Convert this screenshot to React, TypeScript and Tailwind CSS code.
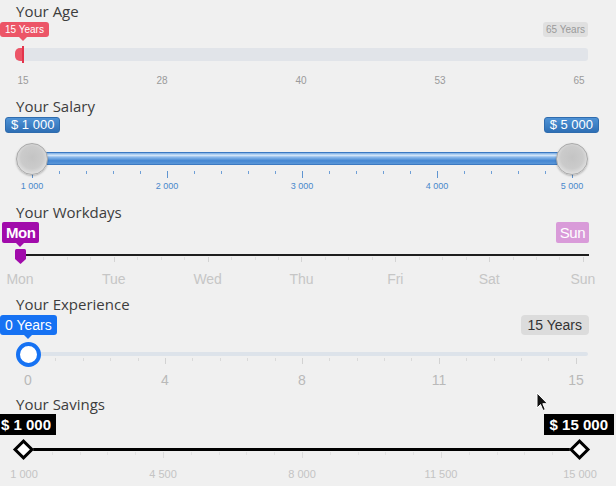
import { clsx } from "clsx";

const sans = "font-['Liberation_Sans',Arial,sans-serif]";

function Title({ children }: { children: string }) {
  return (
    <div className="h-5 pl-4 font-['Open_Sans',sans-serif] text-[15px] leading-5 text-[#3d3d3d]">
      {children}
    </div>
  );
}

interface TicksProps {
  count: number;
  every: number;
  className: string;
  major: string;
  minor: string;
}

function Ticks({ count, every, className, major, minor }: TicksProps) {
  return (
    <div className={clsx("flex items-start justify-between", className)}>
      {Array.from({ length: count }, (_, i) => (
        <span key={i} className={clsx("w-px", i % every === 0 ? major : minor)} />
      ))}
    </div>
  );
}

function Labels({ items, className, item }: { items: string[]; className: string; item: string }) {
  return (
    <div className={clsx("flex justify-between whitespace-nowrap", sans, className)}>
      {items.map((t) => (
        <span key={t} className={clsx("flex justify-center", item)}>
          {t}
        </span>
      ))}
    </div>
  );
}

function AgeSlider() {
  return (
    <section className="h-[95px]">
      <Title>Your Age</Title>
      <div className={clsx("mt-px flex h-[15px] text-[10px] leading-[15px]", sans)}>
        <div className="relative rounded-[3px] bg-[#ec5567] px-[5px] text-white">
          15 Years
          <span className="absolute left-[19px] top-full border-x-[4px] border-t-[4px] border-x-transparent border-t-[#ec5567]" />
        </div>
        <div className="ml-auto mr-[28px] rounded-[3px] bg-[#e0e0e0] px-[3px] text-[#9a9a9a]">65 Years</div>
      </div>
      <div className="relative ml-4 mt-[11px] h-[13px] w-[572px] rounded-[3px] bg-[#e1e4e9]">
        <span className="absolute -left-px top-0 h-full w-[9px] rounded-l-[5px] bg-[#ec5567]" />
        <span className="absolute left-[6px] -top-[2px] h-[17px] w-[2px] bg-[#e3344c]" />
      </div>
      <Labels
        items={["15", "28", "40", "53", "65"]}
        className="ml-[13px] mt-[14px] w-[576px] text-[10px] leading-3 text-[#9a9a9a]"
        item="w-5"
      />
    </section>
  );
}

function SalaryBadge({ children, className }: { children: string; className?: string }) {
  return (
    <div
      className={clsx(
        "rounded-[3px] border border-[#2f6cae] bg-[linear-gradient(to_bottom,#4f93d6,#2e6fb5)] px-[5px] text-[13px] leading-[14px] text-white",
        className,
      )}
    >
      {children}
    </div>
  );
}

function Knob({ className }: { className: string }) {
  return (
    <span
      className={clsx(
        "absolute -top-[10px] h-8 w-8 rounded-full border border-[#a9a9a9] bg-[radial-gradient(circle_at_50%_45%,#c4c4c4_0%,#cbcbcb_50%,#e6e6e6_80%,#f7f7f7_92%,#d6d6d6_100%)] shadow-[0_1px_2px_rgba(0,0,0,0.25)]",
        className,
      )}
    />
  );
}

function SalarySlider() {
  return (
    <section className="h-[106px]">
      <Title>Your Salary</Title>
      <div className={clsx("mt-px flex h-4", sans)}>
        <SalaryBadge className="ml-[5px]">$ 1 000</SalaryBadge>
        <SalaryBadge className="ml-auto mr-[17px]">$ 5 000</SalaryBadge>
      </div>
      <div className="relative ml-8 mt-[19px] h-[13px] w-[540px] border-y border-[#3b79c2] bg-[linear-gradient(to_bottom,#79ace4_0%,#d3e6f9_22%,#8ab8ea_38%,#4386d2_70%,#5b97d8_100%)]">
        <Knob className="-left-4" />
        <Knob className="-right-4" />
      </div>
      <Ticks
        count={21}
        every={5}
        className="ml-8 mt-[6px] h-[7px] w-[541px]"
        major="h-[7px] bg-[#5f95d1]"
        minor="h-[3px] bg-[#6f9fd6]"
      />
      <Labels
        items={["1 000", "2 000", "3 000", "4 000", "5 000"]}
        className="ml-[12px] mt-[2px] w-[580px] text-[9px] leading-3 text-[#4a89cc]"
        item="w-10"
      />
    </section>
  );
}

function WorkdaySlider() {
  return (
    <section className="h-[92px]">
      <Title>Your Workdays</Title>
      <div className={clsx("flex h-[21px] text-[15px] leading-[21px] text-white", sans)}>
        <div className="relative ml-[2px] rounded-[2px] bg-[#a10bab] px-[4px] font-semibold tracking-[-0.5px]">
          Mon
          <span className="absolute left-[14px] top-full border-x-[4px] border-t-[4px] border-x-transparent border-t-[#a10bab]" />
        </div>
        <div className="ml-auto mr-[27px] rounded-[2px] bg-[#d99bd9] px-[4px] tracking-[-0.5px]">Sun</div>
      </div>
      <div className="relative ml-5 mt-[11px] h-[2px] w-[569px] bg-[#1e1e1e]">
        <svg className="absolute -left-[5px] -top-[5px]" width="11" height="15" viewBox="0 0 11 15">
          <path d="M1.5 0H9.5Q11 0 11 1.5V10L5.5 15L0 10V1.5Q0 0 1.5 0Z" fill="#a10bab" />
        </svg>
      </div>
      <Ticks
        count={25}
        every={4}
        className="ml-5 mt-px h-[5px] w-[564px]"
        major="h-[5px] bg-[#d4d4d4]"
        minor="h-[3px] bg-[#dedede]"
      />
      <Labels
        items={["Mon", "Tue", "Wed", "Thu", "Fri", "Sat", "Sun"]}
        className="mt-[8px] w-[603px] text-[14px] leading-[18px] text-[#c6c6c6]"
        item="w-10"
      />
    </section>
  );
}

function ExperienceSlider() {
  return (
    <section className="h-[100px]">
      <Title>Your Experience</Title>
      <div className={clsx("mt-px flex h-5 text-[14px] leading-5", sans)}>
        <div className="relative rounded-[3px] bg-[#1672f3] px-[5px] text-white">
          0 Years
          <span className="absolute left-[24px] top-full border-x-[4px] border-t-[4px] border-x-transparent border-t-[#1672f3]" />
        </div>
        <div className="ml-auto mr-[27px] rounded-[4px] bg-[#dcdcdc] px-[7px] text-[#333]">15 Years</div>
      </div>
      <div className="relative ml-7 mt-[17px] h-1 w-[560px] rounded-full bg-[#dde3ea]">
        <span className="absolute -left-[12px] -top-[10px] h-[25px] w-[25px] rounded-full border-4 border-[#1672f3] bg-white" />
      </div>
      <Ticks
        count={21}
        every={5}
        className="ml-7 mt-[2px] h-[6px] w-[549px]"
        major="h-[6px] bg-[#d2d2d2]"
        minor="h-[3px] bg-[#dadada]"
      />
      <Labels
        items={["0", "4", "8", "11", "15"]}
        className="ml-[18px] mt-[7px] w-[568px] text-[14px] leading-[18px] text-[#b9b9b9]"
        item="w-5"
      />
    </section>
  );
}

function Diamond({ className }: { className: string }) {
  return (
    <span
      className={clsx(
        "absolute -top-[6px] h-[15px] w-[15px] rotate-45 border-[3px] border-black bg-white",
        className,
      )}
    />
  );
}

function SavingsSlider() {
  return (
    <section className="h-[92px]">
      <Title>Your Savings</Title>
      <div className={clsx("flex h-[21px] text-[15px] font-bold leading-[21px] text-white", sans)}>
        <div className="bg-black pl-px pr-[5px]">$ 1 000</div>
        <div className="ml-auto mr-[2px] bg-black px-[6px]">$ 15 000</div>
      </div>
      <div className="relative ml-[23px] mt-[13px] h-[3px] w-[557px] bg-black">
        <Diamond className="-left-[7px]" />
        <Diamond className="-right-[7px]" />
      </div>
      <Ticks
        count={21}
        every={5}
        className="ml-6 mt-px h-[6px] w-[557px]"
        major="h-[6px] bg-[#dcdcdc]"
        minor="h-[3px] bg-[#e2e2e2]"
      />
      <Labels
        items={["1 000", "4 500", "8 000", "11 500", "15 000"]}
        className="mt-[9px] w-[604px] text-[11px] leading-[14px] text-[#c4c4c4]"
        item="w-12"
      />
    </section>
  );
}

export default function App() {
  return (
    <div className="relative h-[486px] w-[616px] overflow-hidden bg-[#f0f0f0] pt-px">
      <AgeSlider />
      <SalarySlider />
      <WorkdaySlider />
      <ExperienceSlider />
      <SavingsSlider />
      <svg className="absolute left-[536px] top-[392px]" width="13" height="20" viewBox="0 0 13 20">
        <path d="M1 1V16L4.5 12.5L7 18.5L9.3 17.5L6.8 11.7H11.5Z" fill="#111" stroke="#fff" strokeWidth="1" />
      </svg>
    </div>
  );
}
